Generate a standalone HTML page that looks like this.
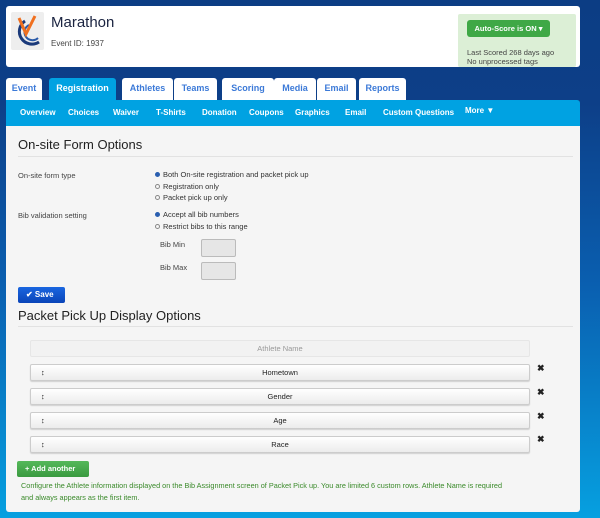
<!DOCTYPE html>
<html><head><meta charset="utf-8"><style>
*{box-sizing:border-box;margin:0;padding:0}
body{width:600px;height:518px;overflow:hidden;font-family:"Liberation Sans",sans-serif;background:linear-gradient(to bottom,#0c3d84 0%,#0d3f88 20%,#0a5fb0 55%,#06a0e0 100%);position:relative}
.hdr{position:absolute;left:6px;top:6px;width:574px;height:61px;background:#fff;border-radius:3px}
.logo{position:absolute;left:5px;top:6px;width:33px;height:38px;background:#eee;border-radius:2px}
.title{position:absolute;left:45px;top:8px;font-size:15px;color:#1a2340}
.eid{position:absolute;left:45px;top:33px;font-size:8px;color:#444}
.auto{position:absolute;left:452px;top:8px;width:118px;height:53px;background:#dcefd6;border-radius:2px}
.abtn{position:absolute;left:9px;top:6px;width:83px;height:17px;background:#3fa846;border-radius:3px;color:#fff;font-size:7.5px;font-weight:bold;text-align:center;line-height:17px;white-space:nowrap}
.ls{position:absolute;left:9px;top:34px;font-size:7.5px;color:#444;line-height:9px}
.tabs{position:absolute;left:6px;top:78px;height:22px}
.tab{position:absolute;top:0;height:22px;background:#fff;border-radius:3px 3px 0 0;color:#3c7ad8;font-size:9px;font-weight:bold;text-align:center;line-height:20px}
.tab.on{background:#00a2e2;color:#fff;height:23px}
.sub{position:absolute;left:6px;top:100px;width:574px;height:26px;background:#00a2e2;border-radius:0 3px 0 0}
.sub span{position:absolute;top:8px;color:#fff;font-size:8px;font-weight:bold}
.panel{position:absolute;left:6px;top:126px;width:574px;height:386px;background:#f5f5f5;border-radius:0 0 3px 3px}
h2{position:absolute;left:12px;font-size:13px;font-weight:normal;color:#222}
.hr{position:absolute;left:12px;width:555px;height:1px;background:#e2e2e2}
.lbl{position:absolute;font-size:7.5px;color:#444}
.r{position:absolute;left:149px;font-size:7.5px;color:#333}
.r i{display:inline-block;width:5px;height:5px;border:1px solid #888;border-radius:50%;margin-right:3px;vertical-align:0}
.r i.c{background:#2a5fb0;border-color:#2a5fb0}
.inp{position:absolute;left:195px;width:35px;height:18px;background:#e6e6e6;border:1px solid #bbb;border-radius:2px}
.save{position:absolute;left:12px;top:161px;width:47px;height:16px;background:linear-gradient(#1a66e0,#0a44b8);border-radius:2px;color:#fff;font-size:8px;font-weight:bold;line-height:16px;padding-left:8px}
.row{position:absolute;left:24px;width:500px;height:17px;background:linear-gradient(#fff,#ececec);border:1px solid #ccc;border-radius:2px;box-shadow:0 1px 1px rgba(0,0,0,.15);font-size:7.5px;color:#222;text-align:center;line-height:16px}
.row b{position:absolute;left:10px;top:0;font-weight:normal}
.x{position:absolute;left:531px;font-size:9px;font-weight:bold;color:#222}
.add{position:absolute;left:11px;top:335px;width:72px;height:16px;background:linear-gradient(#55b85a,#3a9a40);border-radius:2px;color:#fff;font-size:7.5px;font-weight:bold;line-height:16px;padding-left:8px}
.help{position:absolute;left:15px;top:354px;width:490px;font-size:7.3px;color:#3a8a2a;line-height:12px}
</style></head><body>
<div class="hdr">
 <div class="logo"><svg width="33" height="38" viewBox="0 0 33 38"><path d="M14 9 A12 12 0 1 0 28 30" fill="none" stroke="#1b3a7a" stroke-width="3"/><path d="M18 13 A8 8 0 1 0 27 26" fill="none" stroke="#2a5aa8" stroke-width="2"/><path d="M8 6 L15 22 L24 4" fill="none" stroke="#f07020" stroke-width="3"/></svg></div>
 <div class="title">Marathon</div>
 <div class="eid">Event ID: 1937</div>
 <div class="auto"><div class="abtn">Auto-Score is ON ▾</div><div class="ls">Last Scored 268 days ago<br>No unprocessed tags</div></div>
</div>
<div class="tabs">
 <div class="tab" style="left:0;width:36px">Event</div>
 <div class="tab on" style="left:43px;width:67px">Registration</div>
 <div class="tab" style="left:116px;width:51px">Athletes</div>
 <div class="tab" style="left:168px;width:43px">Teams</div>
 <div class="tab" style="left:216px;width:52px">Scoring</div>
 <div class="tab" style="left:268px;width:42px">Media</div>
 <div class="tab" style="left:311px;width:39px">Email</div>
 <div class="tab" style="left:353px;width:47px">Reports</div>
</div>
<div class="sub">
 <span style="left:14px">Overview</span><span style="left:62px">Choices</span><span style="left:107px">Waiver</span><span style="left:150px">T-Shirts</span><span style="left:196px">Donation</span><span style="left:243px">Coupons</span><span style="left:289px">Graphics</span><span style="left:339px">Email</span><span style="left:377px">Custom Questions</span><span style="left:459px;top:6px">More ▼</span>
</div>
<div class="panel">
 <h2 style="top:11px">On-site Form Options</h2>
 <div class="hr" style="top:30px"></div>
 <div class="lbl" style="left:12px;top:45px">On-site form type</div>
 <div class="r" style="top:44px"><i class="c"></i>Both On-site registration and packet pick up</div>
 <div class="r" style="top:56px"><i></i>Registration only</div>
 <div class="r" style="top:67px"><i></i>Packet pick up only</div>
 <div class="lbl" style="left:12px;top:85px">Bib validation setting</div>
 <div class="r" style="top:84px"><i class="c"></i>Accept all bib numbers</div>
 <div class="r" style="top:96px"><i></i>Restrict bibs to this range</div>
 <div class="lbl" style="left:154px;top:114px">Bib Min</div>
 <div class="inp" style="top:113px"></div>
 <div class="lbl" style="left:154px;top:137px">Bib Max</div>
 <div class="inp" style="top:136px"></div>
 <div class="save">✔ Save</div>
 <h2 style="top:182px">Packet Pick Up Display Options</h2>
 <div class="hr" style="top:200px"></div>
 <div class="row" style="top:214px;background:#f2f2f2;border-color:#e6e6e6;box-shadow:none;color:#999">Athlete Name</div>
 <div class="row" style="top:238px"><b>↕</b>Hometown</div><div class="x" style="top:237px">✖</div>
 <div class="row" style="top:262px"><b>↕</b>Gender</div><div class="x" style="top:261px">✖</div>
 <div class="row" style="top:286px"><b>↕</b>Age</div><div class="x" style="top:285px">✖</div>
 <div class="row" style="top:310px"><b>↕</b>Race</div><div class="x" style="top:308px">✖</div>
 <div class="add">+ Add another</div>
 <div class="help">Configure the Athlete information displayed on the Bib Assignment screen of Packet Pick up. You are limited 6 custom rows. Athlete Name is required and always appears as the first item.</div>
</div>
</body></html>
